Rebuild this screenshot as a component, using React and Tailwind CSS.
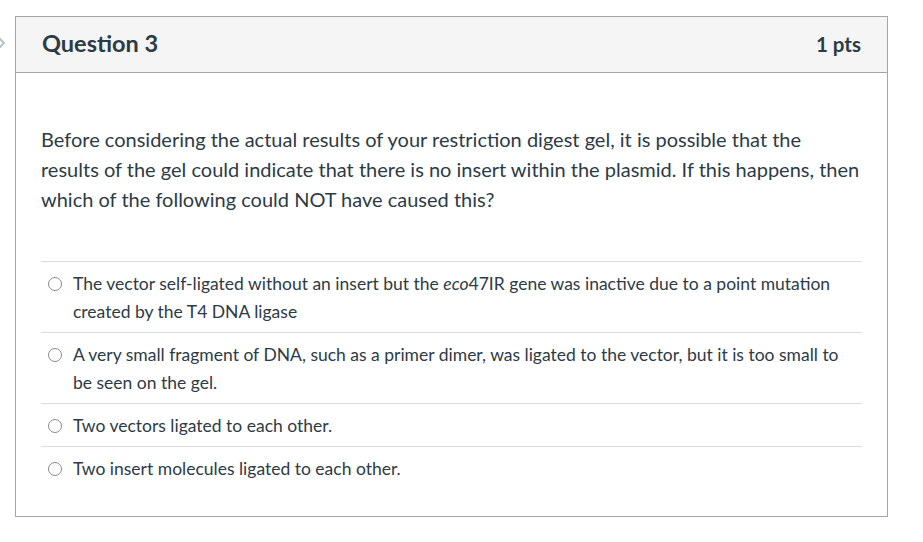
import React from 'react';

const options = [
  {
    id: 1,
    text: (
      <>
        The vector self-ligated without an insert but the <em>eco</em>47IR gene was inactive due to a point mutation
        created by the T4 DNA ligase
      </>
    ),
  },
  {
    id: 2,
    text: 'A very small fragment of DNA, such as a primer dimer, was ligated to the vector, but it is too small to be seen on the gel.',
  },
  { id: 3, text: 'Two vectors ligated to each other.' },
  { id: 4, text: 'Two insert molecules ligated to each other.' },
];

export default function App() {
  return (
    <div
      className="relative w-[923px] h-[542px] bg-white text-[#2d3b45] overflow-hidden"
      style={{ fontFamily: 'Lato, "Open Sans", sans-serif' }}
    >
      <svg className="absolute left-[-6px] top-[36px]" width="12" height="14" viewBox="0 0 12 14">
        <polyline points="4,1 10,7 4,13" fill="none" stroke="#b4c2cf" strokeWidth="2" />
      </svg>

      <div className="ml-[15px] mt-[16px] w-[873px] border border-[#a5a5a5]">
        <div className="h-[56px] bg-[#f5f5f5] border-b border-[#a5a5a5] flex items-center justify-between pl-[26px] pr-[26px] pb-[1px]">
          <h2 className="text-[23.5px] font-bold leading-none">Question 3</h2>
          <span className="text-[20.5px] font-bold leading-none">1 pts</span>
        </div>

        <div className="px-[25px] pt-[51px] pb-[27px]">
          <p className="text-[20px] leading-[30px]">
            Before considering the actual results of your restriction digest gel, it is possible that the results of
            the gel could indicate that there is no insert within the plasmid. If this happens, then which of the
            following could NOT have caused this?
          </p>

          <div className="mt-[47px]">
            {options.map((o) => (
              <div key={o.id} className="flex items-start pt-[8px] pb-[6px] border-t border-[#dcdcdc]">
                <span className="mt-[7px] ml-[7px] mr-[11px] w-[14px] h-[14px] shrink-0 rounded-full border border-[#8a8a8a] bg-white" />
                <span className="text-[17.5px] leading-[28px] pr-[20px]">{o.text}</span>
              </div>
            ))}
          </div>
        </div>
      </div>
    </div>
  );
}
